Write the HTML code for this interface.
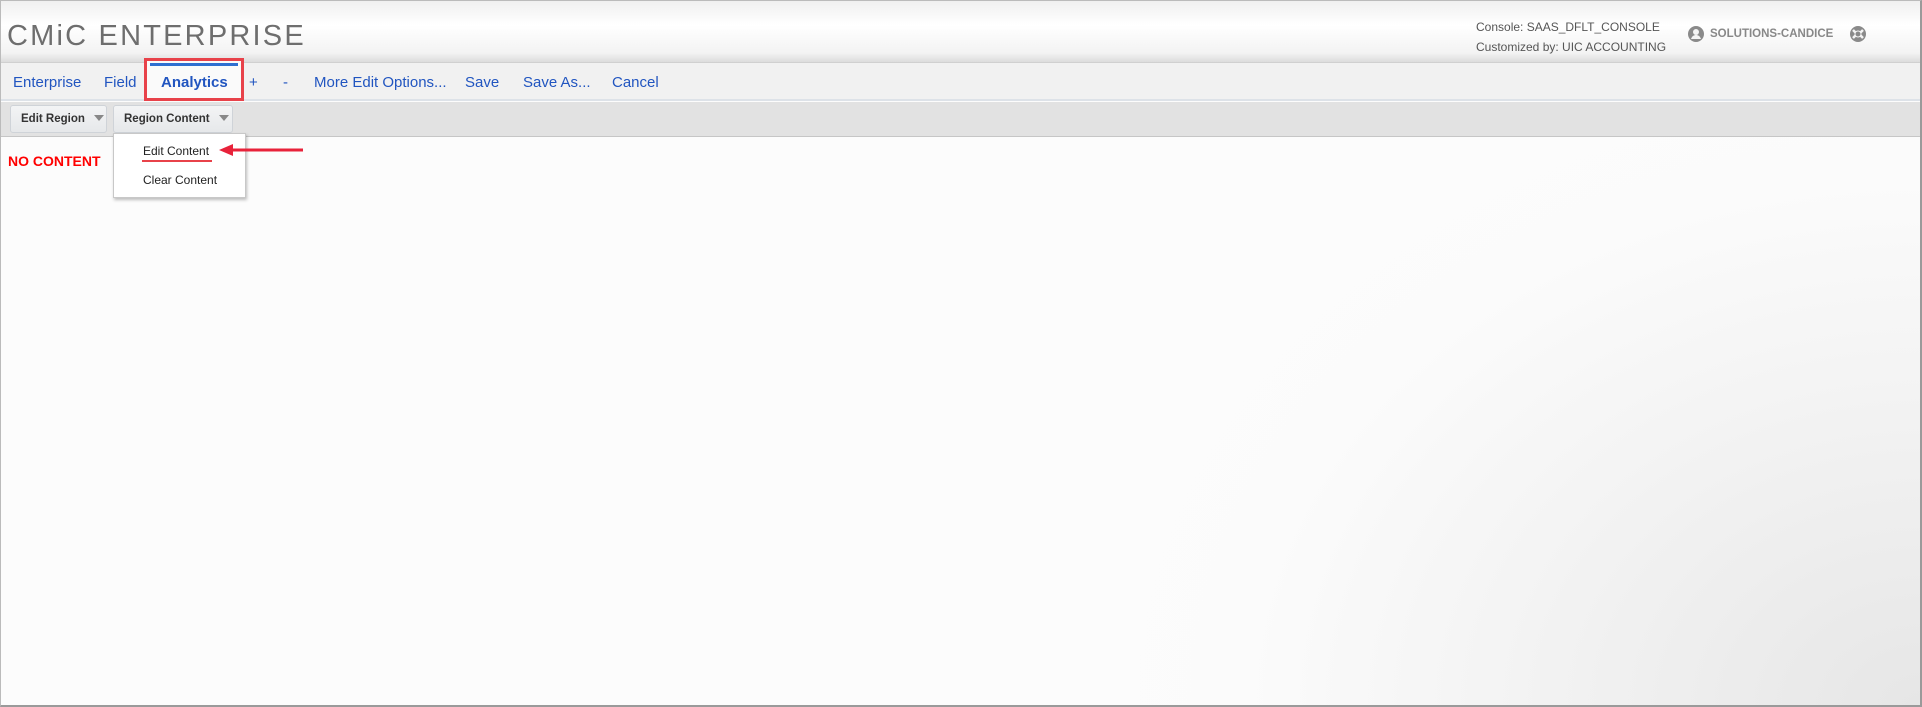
<!DOCTYPE html>
<html><head><meta charset="utf-8"><style>
*{margin:0;padding:0;box-sizing:border-box}
body{width:1922px;height:707px;overflow:hidden;font-family:"Liberation Sans",Arial,sans-serif;background:#fff;position:relative}
#frame{position:absolute;left:0;top:0;width:1922px;height:707px;border:2px solid #9a9a9a;border-left:1px solid #bbb;border-top:1px solid #bbb;overflow:hidden;background:radial-gradient(ellipse 900px 700px at 1922px 707px,#e6e6e6 0%,#f3f3f3 45%,#fbfbfb 75%,#fcfcfc 100%)}
.hdr{position:absolute;left:0;top:0;width:100%;height:62px;background:linear-gradient(#f0f0f0,#fff 40%,#f3f3f3 85%,#dcdcdc);border-bottom:1px solid #d0d0d0}
.logo{position:absolute;left:6px;top:19px;font-size:29px;color:#6e6e6e;letter-spacing:2.2px;font-weight:normal;white-space:nowrap}
.abs{position:absolute;white-space:nowrap}
.nav{position:absolute;left:0;top:62px;width:100%;height:38px;background:#f1f1f1;border-bottom:2px solid #dde2e8}
.nav span{position:absolute;top:11px;font-size:15px;color:#2155c0}
.tab{position:absolute;left:143px;top:57px;width:100px;height:43px;border:3px solid #e8424a;background:#fafafa}
.tab:before{content:"";position:absolute;left:3px;right:3px;top:2px;height:3px;background:#2f6fd0}
.tb{position:absolute;left:0;top:101px;width:100%;height:35px;background:#e2e2e2;border-bottom:1px solid #c6c6c6}
.btn{position:absolute;top:3px;height:28px;border:1px solid #cfd3d8;border-radius:3px;background:linear-gradient(#f3f4f5,#e6e8ea);font-size:11.5px;font-weight:bold;color:#333;padding:7px 0 0 10px;white-space:nowrap}
.tri{display:inline-block;width:0;height:0;border-left:5px solid transparent;border-right:5px solid transparent;border-top:6px solid #888;margin-left:9px;vertical-align:1px}
.dd{position:absolute;left:112px;top:132px;width:133px;height:65px;background:#fff;border:1px solid #c8c8c8;box-shadow:1px 2px 3px rgba(0,0,0,.25)}
.dd span{position:absolute;left:29px;font-size:12px;color:#222;white-space:nowrap}
</style></head><body><div id="frame">
<div class="hdr">
<div class="logo">CMiC ENTERPRISE</div>
<div class="abs" style="left:1475px;top:19px;font-size:12px;color:#555">Console: SAAS_DFLT_CONSOLE</div>
<div class="abs" style="left:1475px;top:39px;font-size:12px;color:#555">Customized by: UIC ACCOUNTING</div>
<svg class="abs" style="left:1687px;top:25px" width="16" height="16" viewBox="0 0 16 16"><circle cx="8" cy="8" r="8" fill="#8a8a8a"/><circle cx="8" cy="6" r="3" fill="#f4f4f4"/><path d="M3 13c1-3 3-4 5-4s4 1 5 4" fill="#f4f4f4"/></svg>
<div class="abs" style="left:1709px;top:27px;font-size:11.5px;font-weight:bold;color:#888">SOLUTIONS-CANDICE</div>
<svg class="abs" style="left:1849px;top:25px" width="16" height="16" viewBox="0 0 16 16"><circle cx="8" cy="8" r="8" fill="#8a8a8a"/><circle cx="8" cy="8" r="3.5" fill="#f4f4f4"/><path d="M3 4l3 3M13 4l-3 3M3 12l3-3M13 12l-3-3" stroke="#f4f4f4" stroke-width="2.5"/><circle cx="8" cy="8" r="2.5" fill="#8a8a8a"/></svg>
</div>
<div class="nav">
<span style="left:12px">Enterprise</span>
<span style="left:103px">Field</span>
<span style="left:248px">+</span>
<span style="left:282px">-</span>
<span style="left:313px">More Edit Options...</span>
<span style="left:464px">Save</span>
<span style="left:522px">Save As...</span>
<span style="left:611px">Cancel</span>
</div>
<div class="tab"></div>
<div class="abs" style="left:160px;top:73px;font-size:15px;font-weight:bold;color:#2155c0">Analytics</div>
<div class="tb">
<div class="btn" style="left:9px;width:97px">Edit Region<span class="tri"></span></div>
<div class="btn" style="left:112px;width:120px">Region Content<span class="tri"></span></div>
</div>
<div class="abs" style="left:7px;top:152px;font-size:14px;font-weight:bold;color:#f00">NO CONTENT</div>
<div class="dd">
<span style="top:10px">Edit Content</span>
<div style="position:absolute;left:28px;top:26px;width:70px;height:2px;background:#e8424a"></div>
<span style="top:39px">Clear Content</span>
</div>
<svg class="abs" style="left:215px;top:142px" width="90" height="14" viewBox="0 0 90 14"><path d="M16 7H87" stroke="#e8223a" stroke-width="3"/><path d="M3 7L17 1V13Z" fill="#e8223a"/></svg>
</div></body></html>
